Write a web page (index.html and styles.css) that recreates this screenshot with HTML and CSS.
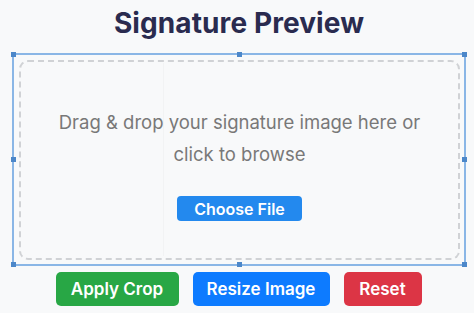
FILE: index.html
```html
<!DOCTYPE html>
<html>
<head>
<meta charset="utf-8">
<link rel="stylesheet" href="styles.css">
</head>
<body>
<div class="page">
  <h1 class="title">Signature Preview</h1>
  <div class="crop">
    <span class="handle h-tl"></span>
    <span class="handle h-tm"></span>
    <span class="handle h-tr"></span>
    <span class="handle h-ml"></span>
    <span class="handle h-mr"></span>
    <span class="handle h-bl"></span>
    <span class="handle h-bm"></span>
    <span class="handle h-br"></span>
    <span class="guide"></span>
    <div class="drop">
      <p class="drop-text">Drag &amp; drop your signature image here or<br>click to browse</p>
      <button class="btn-choose">Choose File</button>
    </div>
  </div>
  <div class="actions">
    <button class="btn btn-green">Apply Crop</button>
    <button class="btn btn-blue">Resize Image</button>
    <button class="btn btn-red">Reset</button>
  </div>
</div>
</body>
</html>
```
FILE: styles.css
```css
html, body {
  margin: 0;
  padding: 0;
  background: #f8f9fa;
  font-family: Inter, "Noto Sans", sans-serif;
}
.page {
  width: 474px;
  height: 313px;
  display: flex;
  flex-direction: column;
  align-items: flex-start;
}
.title {
  align-self: center;
  margin: 5px 0 0 4px;
  font-size: 28px;
  line-height: 36px;
  font-weight: 700;
  color: #2a2b4f;
  letter-spacing: 0.1px;
}
.crop {
  position: relative;
  margin: 12px 0 0 12px;
  width: 454px;
  height: 213px;
  box-sizing: border-box;
  border: 2px solid #8ab6e6;
  padding: 5px 4px 4px 5px;
}
.handle {
  position: absolute;
  width: 5px;
  height: 5px;
  background: #4c87c9;
}
.h-tl { left: -3px; top: -3px; }
.h-tm { left: 223px; top: -3px; }
.h-tr { right: -3px; top: -3px; }
.h-ml { left: -3px; top: 102px; }
.h-mr { right: -3px; top: 102px; }
.h-bl { left: -3px; bottom: -3px; }
.h-bm { left: 223px; bottom: -3px; }
.h-br { right: -3px; bottom: -3px; }
.guide {
  position: absolute;
  left: 149px;
  top: 8px;
  bottom: 8px;
  width: 1px;
  background: #f2f3f4;
}
.drop {
  position: relative;
  height: 100%;
  box-sizing: border-box;
  border: 2px dashed #d0d2d5;
  border-radius: 9px;
  display: flex;
  flex-direction: column;
  align-items: center;
  padding-top: 44px;
}
.drop-text {
  margin: 0;
  text-align: center;
  font-size: 18.5px;
  line-height: 32px;
  color: #787878;
}
.btn-choose {
  margin-top: 26px;
  width: 125px;
  height: 25px;
  border: none;
  border-radius: 4px;
  background: #2389ee;
  color: #fff;
  font-family: Inter, sans-serif;
  font-size: 16px;
  font-weight: 600;
  padding: 0;
  white-space: nowrap;
}
.actions {
  align-self: stretch;
  display: flex;
  justify-content: center;
  gap: 14px;
  margin: 6px 0 0 3px;
}
.btn {
  height: 34px;
  border: none;
  border-radius: 5px;
  color: #fff;
  font-family: Inter, sans-serif;
  font-size: 17px;
  font-weight: 600;
  padding: 0;
  white-space: nowrap;
}
.btn-green { background: #28a745; width: 123px; }
.btn-blue { background: #0d7bff; width: 137px; }
.btn-red { background: #dc3545; width: 78px; }
```
